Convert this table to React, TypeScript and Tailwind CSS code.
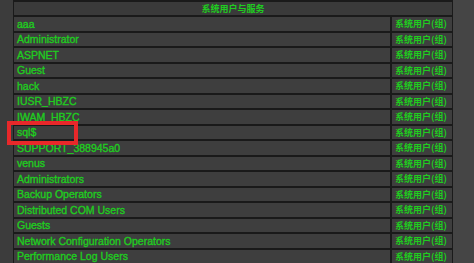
import React from "react";

const rows = [
  "aaa",
  "Administrator",
  "ASPNET",
  "Guest",
  "hack",
  "IUSR_HBZC",
  "IWAM_HBZC",
  "sql$",
  "SUPPORT_388945a0",
  "venus",
  "Administrators",
  "Backup Operators",
  "Distributed COM Users",
  "Guests",
  "Network Configuration Operators",
  "Performance Log Users",
];

export default function App() {
  return (
    <div className="relative w-[474px] h-[263px] overflow-hidden bg-[#3c3c3c] flex">
      <div className="w-[13px] shrink-0 bg-[#3c3c3c]" />
      <div className="w-[440px] shrink-0 border-l-[1.5px] border-t-2 border-r-[1.5px] border-[#1a1a1a] bg-[#3e3e3e]">
        <div className="h-[15px] border-b-2 border-[#1a1a1a] bg-[#3a3a3a] flex items-center justify-center text-[#20cc20] text-[9px] font-bold font-['Noto_Sans_CJK_SC',sans-serif] leading-none">
          系统用户与服务
        </div>
        {rows.map((r) => (
          <div
            key={r}
            className="h-[15.5px] border-b-2 border-[#1a1a1a] flex"
          >
            <div className="flex-1 flex items-center pl-[3px] text-[#20cc20] text-[10.5px] [-webkit-text-stroke:0.35px_#20cc20] font-['Liberation_Sans',Arial,sans-serif] leading-none">
              {r}
            </div>
            <div className="w-[62px] shrink-0 border-l-2 border-[#1a1a1a] flex items-center pl-[3px] text-[#20cc20] text-[9px] font-bold font-['Noto_Sans_CJK_SC',sans-serif] leading-none">
              系统用户(组)
            </div>
          </div>
        ))}
      </div>
      <div className="flex-1 bg-[#454545]" />
      <div className="absolute left-[7px] top-[121px] w-[71px] h-[24px] border-4 border-[#e8282a]" />
    </div>
  );
}
